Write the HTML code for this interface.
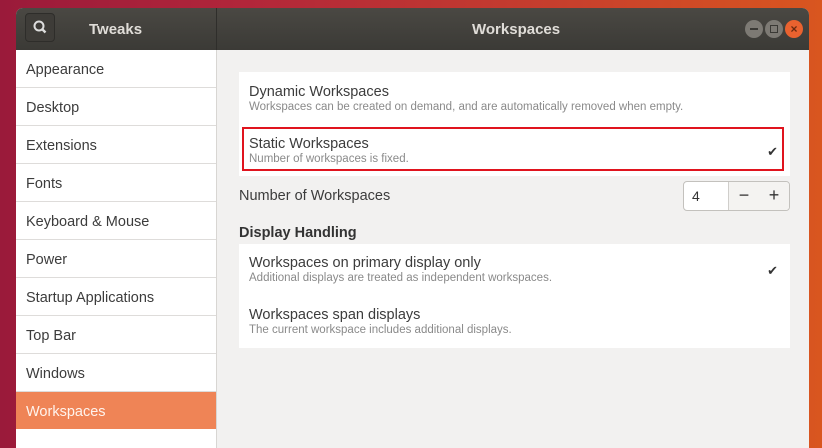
<!DOCTYPE html>
<html><head><style>
body{margin:0;width:822px;height:442px;overflow:hidden;font-family:"Liberation Sans",sans-serif;background:linear-gradient(90deg,#9a1a3a 0%,#b2263a 30%,#c8402c 70%,#d9561f 100%);position:relative}
.win{position:absolute;left:16px;top:8px;width:793px;height:440px;background:#f2f1f0;border-radius:7px 7px 0 0;overflow:hidden}
.tb{height:42px;background:linear-gradient(#4a4843,#3b3a36);position:relative;color:#e0ddd8;font-weight:bold;font-size:15px}
.side{position:absolute;left:0;top:42px;width:200px;bottom:0;background:#fff;border-right:1px solid #d8d6d3}
.side div{height:37px;line-height:40px;border-bottom:1px solid #dedcda;padding-left:10px;font-size:14.5px;color:#3c3c3c}
.side .sel{background:#ef8456;color:#fff3ec;border-bottom:none}
.card{position:absolute;left:223px;width:551px;background:#fff}
.t{font-size:14.5px;color:#3c3c3c;position:absolute;left:10px}
.s{font-size:11.5px;color:#8a8a8a;position:absolute;left:10px}
.chk{position:absolute;right:12px;font-size:13px;color:#333}
</style></head><body>
<div class="win">
<div class="tb">
<div style="position:absolute;left:9px;top:5px;width:30px;height:29px;border:1px solid #2e2d2a;border-radius:4px;background:#3e3c38;box-sizing:border-box"><svg width="28" height="27" viewBox="0 0 28 27"><circle cx="13" cy="12" r="4.5" stroke="#ddd" stroke-width="2" fill="none"/><line x1="16" y1="15" x2="19.5" y2="18.5" stroke="#ddd" stroke-width="2.4"/></svg></div>
<div style="position:absolute;left:73px;top:13px">Tweaks</div>
<div style="position:absolute;left:200px;top:0;width:1px;height:42px;background:#2f2e2b"></div>
<div style="position:absolute;left:456px;top:13px">Workspaces</div>
<div style="position:absolute;left:729px;top:12px;width:18px;height:18px;border-radius:50%;background:#7d7a74"><div style="margin:8px 5px;width:8px;height:2px;background:#3a3935"></div></div>
<div style="position:absolute;left:749px;top:12px;width:18px;height:18px;border-radius:50%;background:#7d7a74"><div style="margin:5px;width:6px;height:6px;border:1px solid #3a3935"></div></div>
<div style="position:absolute;left:769px;top:12px;width:18px;height:18px;border-radius:50%;background:#e9622f;color:#6a2a10;font-size:12px;line-height:18px;text-align:center">×</div>
</div>
<div class="side">
<div>Appearance</div><div>Desktop</div><div>Extensions</div><div>Fonts</div><div>Keyboard &amp; Mouse</div><div>Power</div><div>Startup Applications</div><div>Top Bar</div><div>Windows</div><div class="sel">Workspaces</div>
</div>
<div class="card" style="top:64px;height:104px">
<div class="t" style="top:12px">Dynamic Workspaces</div>
<div class="s" style="top:29px">Workspaces can be created on demand, and are automatically removed when empty.</div>
<div style="position:absolute;left:3px;top:55px;width:538px;height:40px;border:2px solid #e0141e"></div>
<div class="t" style="top:64px">Static Workspaces</div>
<div class="s" style="top:81px">Number of workspaces is fixed.</div>
<div class="chk" style="top:72px">✔</div>
</div>
<div class="t" style="left:223px;top:180px">Number of Workspaces</div>
<div style="position:absolute;left:667px;top:173px;width:105px;height:28px;border:1px solid #c3c1bd;border-radius:4px;background:#fff;overflow:hidden;font-size:14px">
<div style="position:absolute;left:8px;top:6px;color:#333">4</div>
<div style="position:absolute;left:44px;top:0;width:30px;height:28px;background:#f4f3f1;border-left:1px solid #d0cecb;border-right:1px solid #d0cecb;text-align:center;line-height:27px;font-size:18px;color:#333">−</div>
<div style="position:absolute;left:75px;top:0;width:30px;height:28px;background:#f4f3f1;text-align:center;line-height:27px;font-size:18px;color:#333">+</div>
</div>
<div style="position:absolute;left:223px;top:217px;font-size:14.5px;font-weight:bold;color:#333">Display Handling</div>
<div class="card" style="top:236px;height:104px">
<div class="t" style="top:11px">Workspaces on primary display only</div>
<div class="s" style="top:28px">Additional displays are treated as independent workspaces.</div>
<div class="chk" style="top:19px">✔</div>
<div class="t" style="top:63px">Workspaces span displays</div>
<div class="s" style="top:80px">The current workspace includes additional displays.</div>
</div>
</div>
</body></html>
